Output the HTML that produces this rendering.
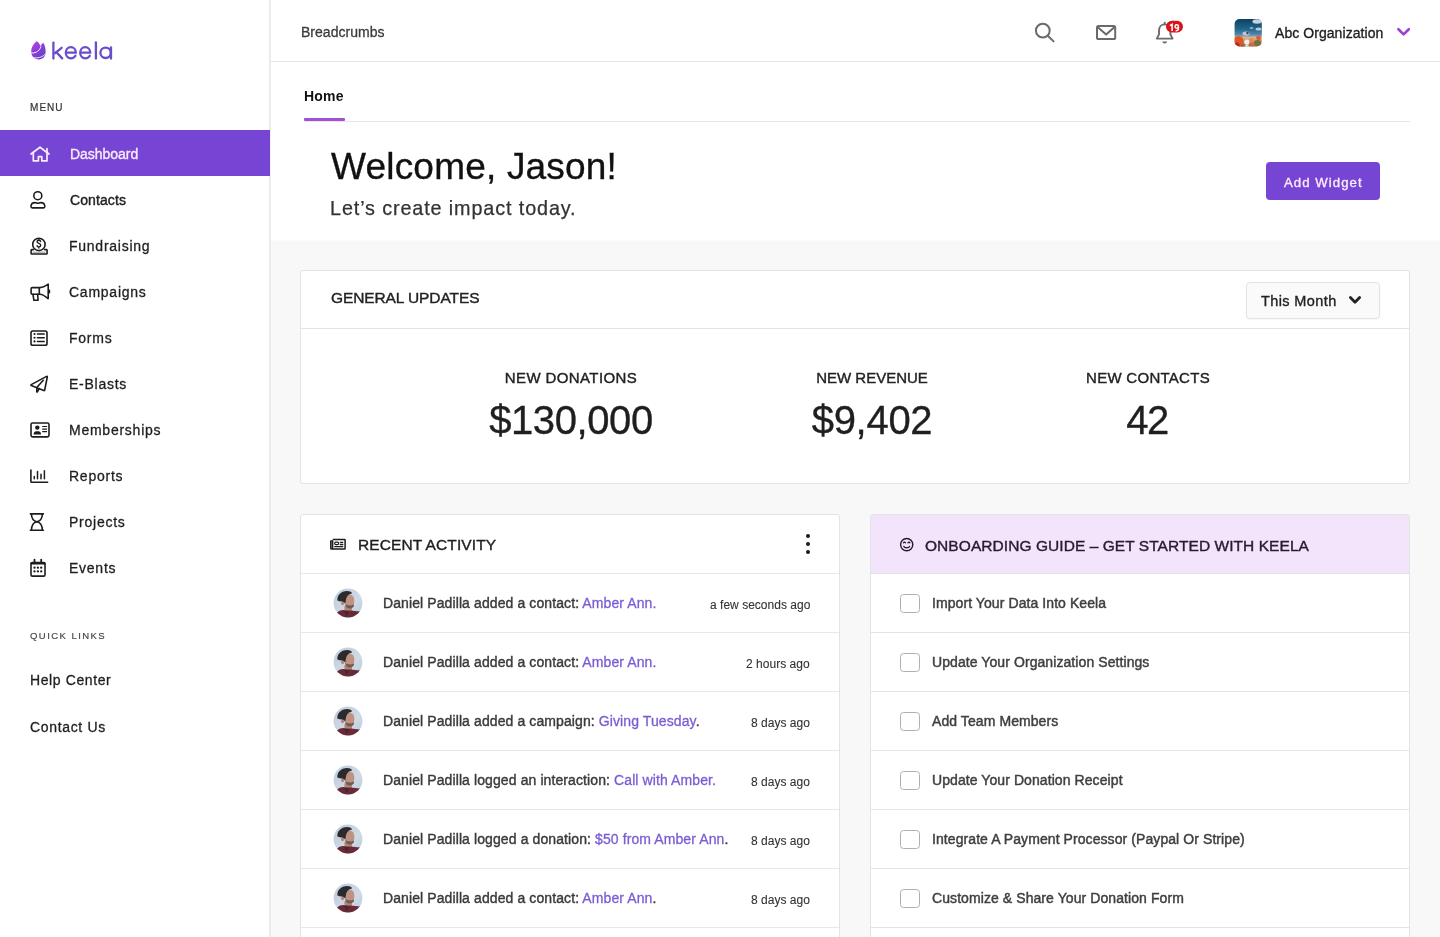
<!DOCTYPE html>
<html><head><meta charset="utf-8">
<style>
*{box-sizing:border-box;margin:0;padding:0}
html,body{width:1440px;height:937px;overflow:hidden}
body{background:#f8f8f8;font-family:"Liberation Sans",sans-serif;color:#222;position:relative}
.a{position:absolute;white-space:nowrap;line-height:1;will-change:transform}
.ico{position:absolute;overflow:visible}
</style></head>
<body>
<div style="position:absolute;left:0px;top:0px;width:270px;height:937px;background:#fff"></div>
<div style="position:absolute;left:270px;top:0px;width:1170px;height:62px;background:#fff;border-bottom:1px solid #e4e4e4"></div>
<div style="position:absolute;left:270px;top:62px;width:1170px;height:178px;background:#fff"></div>
<div style="position:absolute;left:271px;top:240px;width:1169px;height:1px;background:#fbfbfb"></div>
<div style="position:absolute;left:269px;top:0px;width:1px;height:130px;background:#e9e9e9"></div>
<div style="position:absolute;left:269px;top:176px;width:1px;height:761px;background:#e9e9e9"></div>
<div style="position:absolute;left:270px;top:0px;width:1px;height:937px;background:#efefef"></div>
<svg class="ico" style="left:28px;top:38px;" width="88" height="24" viewBox="28 38 88 24">
<defs><linearGradient id="lg" x1="0" y1="0" x2="0.6" y2="1"><stop offset="0" stop-color="#b83ee4"/><stop offset="0.55" stop-color="#8a42d8"/><stop offset="1" stop-color="#6140c6"/></linearGradient></defs>
<path fill="url(#lg)" d="M36.8 41.3 C34.2 43.2 31.4 46.8 31.2 51.2 C31.1 53.8 32 56 33.6 57.6 C35.8 59.6 39.2 60 41.8 58.8 C43.6 57.9 44.9 56.2 45.4 54.2 C45.8 52 45.6 48.6 44.9 46.2 C44.5 44.8 43.9 43.6 43.1 42.8 C41.9 43.8 41 45.2 40.6 46.8 C40.2 44.6 38.8 42.6 36.8 41.3 Z"/>
<path fill="none" stroke="#fbeaff" stroke-width="1.0" d="M30.4 52.6 C34.4 53.8 39 52 41 46.6"/>
<path fill="none" stroke="#fbeaff" stroke-width="1.0" d="M32.6 57.5 C37 58.6 42.6 57.6 46.2 53.2"/>
<g fill="none" stroke="#6a4ccc" stroke-width="2.3" stroke-linecap="round">
<path d="M53.4 42.6 V58.6"/>
<path d="M61.6 47.8 L55.2 53.2"/><path d="M56.2 52 L62.2 58.4"/>
<path d="M66.2 52.6 H75.8 C75.8 49.4 73.6 47.2 70.9 47.2 C68 47.2 65.8 49.6 65.8 52.8 C65.8 56 68 58.3 70.9 58.3 C73 58.3 74.6 57.3 75.4 55.8"/>
<path d="M80.6 52.6 H90.2 C90.2 49.4 88 47.2 85.3 47.2 C82.4 47.2 80.2 49.6 80.2 52.8 C80.2 56 82.4 58.3 85.3 58.3 C87.4 58.3 89 57.3 89.8 55.8"/>
<path d="M95.9 42.4 V58.6"/>
<circle cx="105.6" cy="52.8" r="5.2"/>
<path d="M111 47.4 V58.6"/>
</g></svg>
<div class="a" style="top:102.53px;font-size:10px;color:#333;letter-spacing:1.05px;-webkit-text-stroke:0.2px #333;left:30px;">MENU</div>
<div style="position:absolute;left:0px;top:130px;width:270px;height:46px;background:#7645d3"></div>
<div class="a" style="top:146.75px;font-size:14px;color:#fdeafd;letter-spacing:-0.04px;-webkit-text-stroke:0.35px #fdeafd;left:70px;">Dashboard</div>
<div class="a" style="top:193.15px;font-size:14px;color:#222;letter-spacing:0.1px;-webkit-text-stroke:0.4px #222;left:70px;">Contacts</div>
<div class="a" style="top:239.15px;font-size:14px;color:#1f1f1f;letter-spacing:0.75px;-webkit-text-stroke:0.3px #1f1f1f;left:69px;">Fundraising</div>
<div class="a" style="top:285.15px;font-size:14px;color:#1f1f1f;letter-spacing:0.75px;-webkit-text-stroke:0.3px #1f1f1f;left:69px;">Campaigns</div>
<div class="a" style="top:331.15px;font-size:14px;color:#1f1f1f;letter-spacing:0.75px;-webkit-text-stroke:0.3px #1f1f1f;left:69px;">Forms</div>
<div class="a" style="top:377.15px;font-size:14px;color:#1f1f1f;letter-spacing:0.75px;-webkit-text-stroke:0.3px #1f1f1f;left:69px;">E-Blasts</div>
<div class="a" style="top:423.15px;font-size:14px;color:#1f1f1f;letter-spacing:0.75px;-webkit-text-stroke:0.3px #1f1f1f;left:69px;">Memberships</div>
<div class="a" style="top:469.15px;font-size:14px;color:#1f1f1f;letter-spacing:0.75px;-webkit-text-stroke:0.3px #1f1f1f;left:69px;">Reports</div>
<div class="a" style="top:515.15px;font-size:14px;color:#1f1f1f;letter-spacing:0.75px;-webkit-text-stroke:0.3px #1f1f1f;left:69px;">Projects</div>
<div class="a" style="top:561.15px;font-size:14px;color:#1f1f1f;letter-spacing:0.75px;-webkit-text-stroke:0.3px #1f1f1f;left:69px;">Events</div>
<svg class="ico" style="left:25px;top:140px;" width="30" height="30" viewBox="25 140 30 30"><g fill="none" stroke="#fdeafd" stroke-width="1.7" stroke-linecap="round" stroke-linejoin="round"><path d="M31 154 L40 147.2 L49 154"/><path d="M33.3 152.4 V160.9 H38.4 V156.7 H41.8 V160.9 H47 V152.4"/><path d="M47 148.6 V151.2"/></g></svg>
<svg class="ico" style="left:25px;top:185px;" width="30" height="30" viewBox="25 185 30 30"><g fill="none" stroke="#1d1d1d" stroke-width="1.6" stroke-linecap="round" stroke-linejoin="round"><circle cx="37.8" cy="195.7" r="4"/><path d="M31 206.6 C31 204 32.8 202.6 35 202.6 C36.5 202.6 37 203.3 37.9 203.3 C38.8 203.3 39.3 202.6 40.8 202.6 C43 202.6 44.8 204 44.8 206.6 C44.8 207.4 44.3 207.9 43.6 207.9 H32.2 C31.4 207.9 31 207.4 31 206.6 Z"/></g></svg>
<svg class="ico" style="left:25px;top:231px;" width="30" height="30" viewBox="25 231 30 30"><g fill="none" stroke="#1d1d1d" stroke-width="1.6" stroke-linecap="round" stroke-linejoin="round"><path d="M33.4 249.6 H31.8 C31.3 249.6 31.1 249.9 31.1 250.3 V253.3 C31.1 253.8 31.4 254 31.8 254 H46.4 C46.8 254 47.1 253.8 47.1 253.3 V250.3 C47.1 249.9 46.8 249.6 46.4 249.6 H44.6"/><circle cx="38.9" cy="244.4" r="6.2"/><path d="M33 252.2 H45" stroke="#999" stroke-width="1"/><path d="M40.6 241.4 C40.2 240.6 39.6 240.3 38.8 240.3 C37.8 240.3 37.1 240.9 37.1 241.8 C37.1 243.8 40.7 243.1 40.7 245.3 C40.7 246.2 39.9 246.9 38.9 246.9 C38 246.9 37.3 246.5 37 245.8 M38.9 239.2 V240.3 M38.9 246.9 V248" stroke-width="1.4"/></g></svg>
<svg class="ico" style="left:25px;top:277px;" width="30" height="30" viewBox="25 277 30 30"><g fill="none" stroke="#1d1d1d" stroke-width="1.6" stroke-linecap="round" stroke-linejoin="round"><path d="M32.2 287.6 H40 C43 287.6 45.6 286 48.2 284.2 V298.6 C45.6 296.6 43 294.2 40 294.2 H32.2 C31.5 294.2 31.1 293.7 31.1 293 V288.8 C31.1 288.1 31.5 287.6 32.2 287.6 Z"/><path d="M39.3 287.8 V294"/><path d="M33 294.4 L33.9 300.3 H38.1 L37.6 294.4"/><path d="M49.3 290.4 V292.6" stroke-width="1.8"/></g></svg>
<svg class="ico" style="left:25px;top:323px;" width="30" height="30" viewBox="25 323 30 30"><g fill="none" stroke="#1d1d1d" stroke-width="1.6" stroke-linecap="round" stroke-linejoin="round"><rect x="31" y="331" width="16" height="14.2" rx="1.8"/><path d="M37.4 334 H44.2 M37.4 337.8 H44.2 M37.4 341.4 H44.2" stroke-width="1.5"/></g><g fill="#1d1d1d"><circle cx="34.5" cy="334" r="1.05"/><circle cx="34.5" cy="337.8" r="1.05"/><circle cx="34.5" cy="341.4" r="1.05"/></g></svg>
<svg class="ico" style="left:25px;top:369px;" width="30" height="30" viewBox="25 369 30 30"><g fill="none" stroke="#1d1d1d" stroke-width="1.6" stroke-linecap="round" stroke-linejoin="round"><path d="M31.2 384.6 L46.6 376.4 C47 376.2 47.4 376.5 47.3 377 L44.7 390 C44.6 390.5 44.2 390.7 43.7 390.5 L31.3 385.6 C30.9 385.4 30.9 384.8 31.2 384.6 Z"/><path d="M43.3 380.3 L37 387.2 L36.7 391.6 C36.7 392 37.1 392.2 37.4 391.9 L39.2 388.6"/></g></svg>
<svg class="ico" style="left:25px;top:415px;" width="30" height="30" viewBox="25 415 30 30"><g fill="none" stroke="#1d1d1d" stroke-width="1.6" stroke-linecap="round" stroke-linejoin="round"><rect x="31" y="423" width="18" height="13.9" rx="1.6"/><path d="M42.6 426.5 H46.6 M42.6 429.1 H46.6 M42.6 431.6 H46.6" stroke-width="1.1"/></g><g fill="#1d1d1d"><circle cx="37.3" cy="427.6" r="2.2"/><path d="M33.6 434.4 C33.6 432.4 35 431.2 36.2 431.2 H38.4 C39.8 431.2 41 432.4 41 434.4 Z"/></g></svg>
<svg class="ico" style="left:25px;top:461px;" width="30" height="30" viewBox="25 461 30 30"><g fill="none" stroke="#1d1d1d" stroke-width="1.6" stroke-linecap="round" stroke-linejoin="round"><path d="M30.9 470 V481.4 C30.9 481.9 31.2 482.2 31.7 482.2 H47.6"/><path d="M34.3 476.6 V478.8 M37.5 471.6 V478.8 M41 474.3 V478.8 M44.4 470.8 V478.8" stroke-width="1.5"/></g></svg>
<svg class="ico" style="left:25px;top:507px;" width="30" height="30" viewBox="25 507 30 30"><g fill="none" stroke="#1d1d1d" stroke-width="1.6" stroke-linecap="round" stroke-linejoin="round"><path d="M30.4 513.9 H43.4 M30.4 530.3 H43.4"/><path d="M31.4 514 C31.6 518.4 33.4 521.1 36.9 521.7 C40.4 521.1 42.2 518.4 42.4 514"/><path d="M31.4 530.2 C31.6 525.4 33.4 522.3 36.9 521.7 C40.4 522.3 42.2 525.4 42.4 530.2"/></g></svg>
<svg class="ico" style="left:25px;top:553px;" width="30" height="30" viewBox="25 553 30 30"><g fill="none" stroke="#1d1d1d" stroke-width="1.6" stroke-linecap="round" stroke-linejoin="round"><rect x="31" y="562.5" width="14" height="13.6" rx="1.4"/><path d="M31.2 563.4 H44.8" stroke-width="2"/><path d="M34.5 559.6 V562 M41.2 559.6 V562" stroke-width="1.8"/></g><g fill="#1d1d1d"><circle cx="34.5" cy="567.7" r="1.15"/><circle cx="37.9" cy="567.7" r="1.15"/><circle cx="41.2" cy="567.7" r="1.15"/><circle cx="34.5" cy="571.4" r="1.15"/><circle cx="37.9" cy="571.4" r="1.15"/><circle cx="41.2" cy="571.4" r="1.15"/></g></svg>
<div class="a" style="top:630.86px;font-size:9.5px;color:#444;letter-spacing:1.45px;-webkit-text-stroke:0.15px #444;left:30px;">QUICK LINKS</div>
<div class="a" style="top:673.45px;font-size:14px;color:#1f1f1f;letter-spacing:0.6px;-webkit-text-stroke:0.3px #1f1f1f;left:30px;">Help Center</div>
<div class="a" style="top:719.65px;font-size:14px;color:#1f1f1f;letter-spacing:0.66px;-webkit-text-stroke:0.3px #1f1f1f;left:30px;">Contact Us</div>
<div class="a" style="top:24.95px;font-size:14px;color:#3c3c3c;letter-spacing:0.02px;-webkit-text-stroke:0.3px #3c3c3c;left:300.5px;">Breadcrumbs</div>
<svg class="ico" style="left:1030px;top:15px;" width="30" height="32" viewBox="1030 15 30 32"><g fill="none" stroke="#6a6a6a" stroke-width="2" stroke-linecap="round" stroke-linejoin="round"><circle cx="1042.8" cy="30.6" r="6.9"/><path d="M1047.8 35.8 L1053.6 41.4"/></g></svg>
<svg class="ico" style="left:1090px;top:15px;" width="32" height="32" viewBox="1090 15 32 32"><g fill="none" stroke="#6a6a6a" stroke-width="2" stroke-linecap="round" stroke-linejoin="round"><rect x="1097" y="25.9" width="18.2" height="13.1" rx="1.6"/><path d="M1097.6 27 L1106.1 34.6 L1114.6 27"/></g></svg>
<svg class="ico" style="left:1150px;top:12px;" width="40" height="35" viewBox="1150 12 40 35"><g fill="none" stroke="#6a6a6a" stroke-width="2" stroke-linecap="round" stroke-linejoin="round"><path d="M1156.8 38.6 H1172.6 L1170.4 34.4 V30.8 C1170.4 27 1168 24.4 1164.7 24.4 C1161.4 24.4 1159 27 1159 30.8 V34.4 Z" stroke-width="1.9"/><path d="M1164.7 22.8 V24.2" stroke-width="1.9"/></g><path d="M1162.3 41.4 H1167.1 C1166.9 42.7 1166 43.4 1164.7 43.4 C1163.4 43.4 1162.5 42.7 1162.3 41.4 Z" fill="#6a6a6a"/><rect x="1166" y="20.8" width="17" height="11.8" rx="5.9" fill="#d7141a"/></svg>
<svg class="ico" style="left:1166px;top:20px;" width="18" height="13" viewBox="1166 20 18 13"><g fill="none" stroke="#fff" stroke-width="1.55" stroke-linecap="butt"><path d="M1169.9 25.6 L1172.1 24.3 V31.1"/><circle cx="1176.7" cy="26.5" r="1.75" stroke-width="1.45"/><path d="M1178.45 26.6 V28.6 C1178.45 30.2 1177.5 30.9 1175.6 30.9" stroke-width="1.45"/></g></svg>
<svg class="ico" style="left:1234px;top:19px;" width="28" height="28" viewBox="1234 19 28 28"><defs><linearGradient id="sky" x1="0" y1="0" x2="0" y2="1"><stop offset="0" stop-color="#0e3f63"/><stop offset="0.35" stop-color="#1f6688"/><stop offset="0.55" stop-color="#4f86ad"/><stop offset="0.66" stop-color="#c9b8a0"/><stop offset="0.75" stop-color="#e39a5c"/><stop offset="1" stop-color="#9a5a38"/></linearGradient><clipPath id="oc"><rect x="1234.6" y="19" width="27.2" height="27.4" rx="5"/></clipPath><filter id="bl" x="-20%" y="-20%" width="140%" height="140%"><feGaussianBlur stdDeviation="0.7"/></filter></defs>
<g clip-path="url(#oc)"><rect x="1234" y="19" width="28" height="28" fill="url(#sky)"/>
<g filter="url(#bl)"><ellipse cx="1257" cy="21.5" rx="4.5" ry="2.2" fill="#c9d3dc"/><ellipse cx="1258.5" cy="29" rx="3" ry="1.6" fill="#b7cad8"/><ellipse cx="1251.5" cy="28" rx="1.8" ry="0.9" fill="#8fb2c8"/>
<ellipse cx="1246" cy="33.5" rx="3.5" ry="2" fill="#c4c6cc"/><circle cx="1247.5" cy="33" r="1.2" fill="#3a3470"/>
<ellipse cx="1238.5" cy="41.5" rx="5" ry="5.5" fill="#e0542c"/><circle cx="1237" cy="45" r="2.5" fill="#b42a1e"/>
<circle cx="1246.8" cy="42" r="2.6" fill="#eef0ee"/><circle cx="1247" cy="46" r="1.8" fill="#dfe5df"/>
<circle cx="1251.5" cy="39.5" r="1.6" fill="#e2856a"/><circle cx="1258.5" cy="37.8" r="2.4" fill="#de5a34"/>
<ellipse cx="1257.5" cy="43" rx="3.5" ry="3" fill="#6b7440"/><circle cx="1253" cy="45" r="1.8" fill="#d9683a"/><circle cx="1242.5" cy="46" r="1.6" fill="#7a6a3a"/></g></g></svg>
<div class="a" style="top:25.95px;font-size:14px;color:#1f1f1f;letter-spacing:0.06px;-webkit-text-stroke:0.35px #1f1f1f;left:1275px;">Abc Organization</div>
<svg class="ico" style="left:1394px;top:24px;" width="20" height="16" viewBox="1394 24 20 16"><path d="M1398.4 29.2 L1403.6 34.4 L1408.8 29.2" fill="none" stroke="#9b44d2" stroke-width="2.7" stroke-linecap="round" stroke-linejoin="round"/></svg>
<div class="a" style="top:89.15px;font-size:14px;color:#111;letter-spacing:0.23px;font-weight:bold;left:304.4px;">Home</div>
<div style="position:absolute;left:304px;top:120.6px;width:1106px;height:1px;background:#e6e6e6"></div>
<div style="position:absolute;left:304px;top:118px;width:41px;height:3px;background:#a24fd3;border-radius:1px"></div>
<div class="a" style="top:148.27px;font-size:37px;color:#111;letter-spacing:0.2px;-webkit-text-stroke:0.35px #111;left:330.5px;">Welcome, Jason!</div>
<div class="a" style="top:199.04px;font-size:19.8px;color:#333;letter-spacing:0.88px;-webkit-text-stroke:0.25px #333;left:330.2px;">Let’s create impact today.</div>
<div style="position:absolute;left:1266px;top:162px;width:114px;height:38px;background:#7645d3;border-radius:4px"></div>
<div class="a" style="top:175.82px;font-size:13.2px;color:#fdeafd;letter-spacing:1.05px;-webkit-text-stroke:0.35px #fdeafd;left:1284.2px;">Add Widget</div>
<div style="position:absolute;left:300px;top:270px;width:1110px;height:214px;background:#fff;border:1px solid #e3e3e3;border-radius:3px"></div>
<div style="position:absolute;left:301px;top:327.6px;width:1108px;height:1px;background:#e4e4e4"></div>
<div class="a" style="top:290.48px;font-size:15.5px;color:#222;letter-spacing:-0.1px;-webkit-text-stroke:0.4px #222;left:330.8px;">GENERAL UPDATES</div>
<div style="position:absolute;left:1245.6px;top:281.6px;width:134.4px;height:37px;background:#fafafb;border:1px solid #e3e3e6;border-radius:4px;box-shadow:0 1px 2px rgba(0,0,0,0.04)"></div>
<div class="a" style="top:293.82px;font-size:14.5px;color:#222;letter-spacing:0.39px;-webkit-text-stroke:0.35px #222;left:1261.3px;">This Month</div>
<svg class="ico" style="left:1344px;top:290px;" width="22" height="18" viewBox="1344 290 22 18"><path d="M1350.4 297.6 L1355 302.2 L1359.6 297.6" fill="none" stroke="#222" stroke-width="2.8" stroke-linecap="round" stroke-linejoin="round"/></svg>
<div class="a" style="top:370.20px;font-size:15px;color:#222;letter-spacing:0.38999999999999996px;-webkit-text-stroke:0.4px #222;left:571.40px;transform:translateX(-50%);">NEW DONATIONS</div>
<div class="a" style="top:400.43px;font-size:40px;color:#1f1f1f;letter-spacing:-0.4px;-webkit-text-stroke:0.35px #1f1f1f;left:571.00px;transform:translateX(-50%);">$130,000</div>
<div class="a" style="top:370.20px;font-size:15px;color:#222;-webkit-text-stroke:0.4px #222;left:872.30px;transform:translateX(-50%);">NEW REVENUE</div>
<div class="a" style="top:400.43px;font-size:40px;color:#1f1f1f;letter-spacing:-0.3px;-webkit-text-stroke:0.35px #1f1f1f;left:872.15px;transform:translateX(-50%);">$9,402</div>
<div class="a" style="top:370.20px;font-size:15px;color:#222;letter-spacing:0.27999999999999997px;-webkit-text-stroke:0.4px #222;left:1148.34px;transform:translateX(-50%);">NEW CONTACTS</div>
<div class="a" style="top:400.43px;font-size:40px;color:#1f1f1f;letter-spacing:-1.5px;-webkit-text-stroke:0.35px #1f1f1f;left:1147.45px;transform:translateX(-50%);">42</div>
<div style="position:absolute;left:300px;top:514px;width:540px;height:430px;background:#fff;border:1px solid #e3e3e3;border-radius:3px"></div>
<svg class="ico" style="left:326px;top:534px;" width="24" height="20" viewBox="326 534 24 20"><g fill="none" stroke="#1d1d1d" stroke-width="1.5" stroke-linejoin="round"><path d="M332.7 539.6 H344.6 C344.9 539.6 345.1 539.8 345.1 540.1 V548.6 C345.1 548.9 344.9 549.1 344.6 549.1 H331.6 C331.1 549.1 330.8 548.8 330.8 548.3 V540.9 H332.6 V548.9"/></g><g fill="none" stroke="#1d1d1d" stroke-width="1.2" stroke-linecap="round"><rect x="334.7" y="542.1" width="3.9" height="2.5" rx="1.2"/><path d="M340.3 542.3 H342.8 M340.3 544.5 H342.8 M334.7 546.6 H342.8" stroke-width="1.3"/></g></svg>
<div class="a" style="top:537.38px;font-size:15.5px;color:#1f1f1f;letter-spacing:0.1px;-webkit-text-stroke:0.4px #1f1f1f;left:357.6px;">RECENT ACTIVITY</div>
<div style="position:absolute;left:806px;top:534px;width:4.2px;height:4.2px;border-radius:50%;background:#1a1a1a"></div>
<div style="position:absolute;left:806px;top:542px;width:4.2px;height:4.2px;border-radius:50%;background:#1a1a1a"></div>
<div style="position:absolute;left:806px;top:550px;width:4.2px;height:4.2px;border-radius:50%;background:#1a1a1a"></div>
<div style="position:absolute;left:301px;top:573px;width:538px;height:1px;background:#e8e8e8"></div>
<svg class="ico" style="left:332.5px;top:588px;" width="30" height="30" viewBox="332.5 588 30 30"><defs><clipPath id="pc0"><circle cx="347.5" cy="603" r="14.4"/></clipPath><linearGradient id="bg0" x1="0" y1="0" x2="1" y2="1"><stop offset="0" stop-color="#bccadb"/><stop offset="0.6" stop-color="#cfdae6"/><stop offset="1" stop-color="#b9c8d8"/></linearGradient></defs>
<g clip-path="url(#pc0)"><rect x="332.5" y="588" width="30" height="30" fill="url(#bg0)"/>
<path d="M344.00 606.00 C343.50 609.00 344.50 612.00 345.50 613.00 L351.50 613.00 351.50 607.00 Z" fill="#b08676"/>
<ellipse cx="349.1" cy="601" rx="4.8" ry="6.6" fill="#bf9282"/>
<path d="M344.50 604.00 C345.50 609.00 350.00 610.00 353.30 606.50 L353.50 604.50 350.50 605.50 346.50 605.00 Z" fill="#6f5c52"/>
<ellipse cx="342.1" cy="603.2" rx="1.5" ry="2.1" fill="#b48474"/>
<path d="M336.90 600.50 C336.30 595.50 340.50 591.00 346.50 591.00 C349.50 591.00 351.50 592.00 351.50 593.50 C349.00 594.00 346.50 595.50 345.70 598.50 L344.70 603.50 C343.00 601.50 341.00 601.00 340.00 601.50 Z" fill="#2b2a2e"/>
<path d="M335.50 619.00 L336.50 612.50 C339.50 609.50 343.50 609.50 346.50 610.50 C349.50 610.50 354.50 611.00 361.50 611.50 L362.50 619.00 Z" fill="#6b2836"/>
<path d="M343.50 611.00 L346.50 616.00 348.50 611.40 Z" fill="#3c2a2e"/></g></svg>
<div class="a" style="top:595.95px;font-size:14px;color:#3a3a3a;letter-spacing:0.1px;-webkit-text-stroke:0.4px #3a3a3a;left:383.4px;">Daniel Padilla added a contact: <span style="color:#7b5cd3;-webkit-text-stroke:0.3px #7b5cd3">Amber Ann.</span></div>
<div class="a" style="top:598.84px;font-size:12px;color:#333;letter-spacing:0.02px;-webkit-text-stroke:0.1px #333;right:629.98px;">a few seconds ago</div>
<div style="position:absolute;left:301px;top:632px;width:538px;height:1px;background:#e8e8e8"></div>
<svg class="ico" style="left:332.5px;top:647px;" width="30" height="30" viewBox="332.5 647 30 30"><defs><clipPath id="pc1"><circle cx="347.5" cy="662" r="14.4"/></clipPath><linearGradient id="bg1" x1="0" y1="0" x2="1" y2="1"><stop offset="0" stop-color="#bccadb"/><stop offset="0.6" stop-color="#cfdae6"/><stop offset="1" stop-color="#b9c8d8"/></linearGradient></defs>
<g clip-path="url(#pc1)"><rect x="332.5" y="647" width="30" height="30" fill="url(#bg1)"/>
<path d="M344.00 665.00 C343.50 668.00 344.50 671.00 345.50 672.00 L351.50 672.00 351.50 666.00 Z" fill="#b08676"/>
<ellipse cx="349.1" cy="660" rx="4.8" ry="6.6" fill="#bf9282"/>
<path d="M344.50 663.00 C345.50 668.00 350.00 669.00 353.30 665.50 L353.50 663.50 350.50 664.50 346.50 664.00 Z" fill="#6f5c52"/>
<ellipse cx="342.1" cy="662.2" rx="1.5" ry="2.1" fill="#b48474"/>
<path d="M336.90 659.50 C336.30 654.50 340.50 650.00 346.50 650.00 C349.50 650.00 351.50 651.00 351.50 652.50 C349.00 653.00 346.50 654.50 345.70 657.50 L344.70 662.50 C343.00 660.50 341.00 660.00 340.00 660.50 Z" fill="#2b2a2e"/>
<path d="M335.50 678.00 L336.50 671.50 C339.50 668.50 343.50 668.50 346.50 669.50 C349.50 669.50 354.50 670.00 361.50 670.50 L362.50 678.00 Z" fill="#6b2836"/>
<path d="M343.50 670.00 L346.50 675.00 348.50 670.40 Z" fill="#3c2a2e"/></g></svg>
<div class="a" style="top:654.95px;font-size:14px;color:#3a3a3a;letter-spacing:0.1px;-webkit-text-stroke:0.4px #3a3a3a;left:383.4px;">Daniel Padilla added a contact: <span style="color:#7b5cd3;-webkit-text-stroke:0.3px #7b5cd3">Amber Ann.</span></div>
<div class="a" style="top:657.84px;font-size:12px;color:#333;letter-spacing:0.02px;-webkit-text-stroke:0.1px #333;right:629.98px;">2 hours ago</div>
<div style="position:absolute;left:301px;top:691px;width:538px;height:1px;background:#e8e8e8"></div>
<svg class="ico" style="left:332.5px;top:706px;" width="30" height="30" viewBox="332.5 706 30 30"><defs><clipPath id="pc2"><circle cx="347.5" cy="721" r="14.4"/></clipPath><linearGradient id="bg2" x1="0" y1="0" x2="1" y2="1"><stop offset="0" stop-color="#bccadb"/><stop offset="0.6" stop-color="#cfdae6"/><stop offset="1" stop-color="#b9c8d8"/></linearGradient></defs>
<g clip-path="url(#pc2)"><rect x="332.5" y="706" width="30" height="30" fill="url(#bg2)"/>
<path d="M344.00 724.00 C343.50 727.00 344.50 730.00 345.50 731.00 L351.50 731.00 351.50 725.00 Z" fill="#b08676"/>
<ellipse cx="349.1" cy="719" rx="4.8" ry="6.6" fill="#bf9282"/>
<path d="M344.50 722.00 C345.50 727.00 350.00 728.00 353.30 724.50 L353.50 722.50 350.50 723.50 346.50 723.00 Z" fill="#6f5c52"/>
<ellipse cx="342.1" cy="721.2" rx="1.5" ry="2.1" fill="#b48474"/>
<path d="M336.90 718.50 C336.30 713.50 340.50 709.00 346.50 709.00 C349.50 709.00 351.50 710.00 351.50 711.50 C349.00 712.00 346.50 713.50 345.70 716.50 L344.70 721.50 C343.00 719.50 341.00 719.00 340.00 719.50 Z" fill="#2b2a2e"/>
<path d="M335.50 737.00 L336.50 730.50 C339.50 727.50 343.50 727.50 346.50 728.50 C349.50 728.50 354.50 729.00 361.50 729.50 L362.50 737.00 Z" fill="#6b2836"/>
<path d="M343.50 729.00 L346.50 734.00 348.50 729.40 Z" fill="#3c2a2e"/></g></svg>
<div class="a" style="top:713.95px;font-size:14px;color:#3a3a3a;letter-spacing:0.1px;-webkit-text-stroke:0.4px #3a3a3a;left:383.4px;">Daniel Padilla added a campaign: <span style="color:#7b5cd3;-webkit-text-stroke:0.3px #7b5cd3">Giving Tuesday</span>.</div>
<div class="a" style="top:716.84px;font-size:12px;color:#333;letter-spacing:0.02px;-webkit-text-stroke:0.1px #333;right:629.98px;">8 days ago</div>
<div style="position:absolute;left:301px;top:750px;width:538px;height:1px;background:#e8e8e8"></div>
<svg class="ico" style="left:332.5px;top:765px;" width="30" height="30" viewBox="332.5 765 30 30"><defs><clipPath id="pc3"><circle cx="347.5" cy="780" r="14.4"/></clipPath><linearGradient id="bg3" x1="0" y1="0" x2="1" y2="1"><stop offset="0" stop-color="#bccadb"/><stop offset="0.6" stop-color="#cfdae6"/><stop offset="1" stop-color="#b9c8d8"/></linearGradient></defs>
<g clip-path="url(#pc3)"><rect x="332.5" y="765" width="30" height="30" fill="url(#bg3)"/>
<path d="M344.00 783.00 C343.50 786.00 344.50 789.00 345.50 790.00 L351.50 790.00 351.50 784.00 Z" fill="#b08676"/>
<ellipse cx="349.1" cy="778" rx="4.8" ry="6.6" fill="#bf9282"/>
<path d="M344.50 781.00 C345.50 786.00 350.00 787.00 353.30 783.50 L353.50 781.50 350.50 782.50 346.50 782.00 Z" fill="#6f5c52"/>
<ellipse cx="342.1" cy="780.2" rx="1.5" ry="2.1" fill="#b48474"/>
<path d="M336.90 777.50 C336.30 772.50 340.50 768.00 346.50 768.00 C349.50 768.00 351.50 769.00 351.50 770.50 C349.00 771.00 346.50 772.50 345.70 775.50 L344.70 780.50 C343.00 778.50 341.00 778.00 340.00 778.50 Z" fill="#2b2a2e"/>
<path d="M335.50 796.00 L336.50 789.50 C339.50 786.50 343.50 786.50 346.50 787.50 C349.50 787.50 354.50 788.00 361.50 788.50 L362.50 796.00 Z" fill="#6b2836"/>
<path d="M343.50 788.00 L346.50 793.00 348.50 788.40 Z" fill="#3c2a2e"/></g></svg>
<div class="a" style="top:772.95px;font-size:14px;color:#3a3a3a;letter-spacing:0.1px;-webkit-text-stroke:0.4px #3a3a3a;left:383.4px;">Daniel Padilla logged an interaction: <span style="color:#7b5cd3;-webkit-text-stroke:0.3px #7b5cd3">Call with Amber.</span></div>
<div class="a" style="top:775.84px;font-size:12px;color:#333;letter-spacing:0.02px;-webkit-text-stroke:0.1px #333;right:629.98px;">8 days ago</div>
<div style="position:absolute;left:301px;top:809px;width:538px;height:1px;background:#e8e8e8"></div>
<svg class="ico" style="left:332.5px;top:824px;" width="30" height="30" viewBox="332.5 824 30 30"><defs><clipPath id="pc4"><circle cx="347.5" cy="839" r="14.4"/></clipPath><linearGradient id="bg4" x1="0" y1="0" x2="1" y2="1"><stop offset="0" stop-color="#bccadb"/><stop offset="0.6" stop-color="#cfdae6"/><stop offset="1" stop-color="#b9c8d8"/></linearGradient></defs>
<g clip-path="url(#pc4)"><rect x="332.5" y="824" width="30" height="30" fill="url(#bg4)"/>
<path d="M344.00 842.00 C343.50 845.00 344.50 848.00 345.50 849.00 L351.50 849.00 351.50 843.00 Z" fill="#b08676"/>
<ellipse cx="349.1" cy="837" rx="4.8" ry="6.6" fill="#bf9282"/>
<path d="M344.50 840.00 C345.50 845.00 350.00 846.00 353.30 842.50 L353.50 840.50 350.50 841.50 346.50 841.00 Z" fill="#6f5c52"/>
<ellipse cx="342.1" cy="839.2" rx="1.5" ry="2.1" fill="#b48474"/>
<path d="M336.90 836.50 C336.30 831.50 340.50 827.00 346.50 827.00 C349.50 827.00 351.50 828.00 351.50 829.50 C349.00 830.00 346.50 831.50 345.70 834.50 L344.70 839.50 C343.00 837.50 341.00 837.00 340.00 837.50 Z" fill="#2b2a2e"/>
<path d="M335.50 855.00 L336.50 848.50 C339.50 845.50 343.50 845.50 346.50 846.50 C349.50 846.50 354.50 847.00 361.50 847.50 L362.50 855.00 Z" fill="#6b2836"/>
<path d="M343.50 847.00 L346.50 852.00 348.50 847.40 Z" fill="#3c2a2e"/></g></svg>
<div class="a" style="top:831.95px;font-size:14px;color:#3a3a3a;letter-spacing:0.1px;-webkit-text-stroke:0.4px #3a3a3a;left:383.4px;">Daniel Padilla logged a donation: <span style="color:#7b5cd3;-webkit-text-stroke:0.3px #7b5cd3">$50 from Amber Ann</span>.</div>
<div class="a" style="top:834.84px;font-size:12px;color:#333;letter-spacing:0.02px;-webkit-text-stroke:0.1px #333;right:629.98px;">8 days ago</div>
<div style="position:absolute;left:301px;top:868px;width:538px;height:1px;background:#e8e8e8"></div>
<svg class="ico" style="left:332.5px;top:883px;" width="30" height="30" viewBox="332.5 883 30 30"><defs><clipPath id="pc5"><circle cx="347.5" cy="898" r="14.4"/></clipPath><linearGradient id="bg5" x1="0" y1="0" x2="1" y2="1"><stop offset="0" stop-color="#bccadb"/><stop offset="0.6" stop-color="#cfdae6"/><stop offset="1" stop-color="#b9c8d8"/></linearGradient></defs>
<g clip-path="url(#pc5)"><rect x="332.5" y="883" width="30" height="30" fill="url(#bg5)"/>
<path d="M344.00 901.00 C343.50 904.00 344.50 907.00 345.50 908.00 L351.50 908.00 351.50 902.00 Z" fill="#b08676"/>
<ellipse cx="349.1" cy="896" rx="4.8" ry="6.6" fill="#bf9282"/>
<path d="M344.50 899.00 C345.50 904.00 350.00 905.00 353.30 901.50 L353.50 899.50 350.50 900.50 346.50 900.00 Z" fill="#6f5c52"/>
<ellipse cx="342.1" cy="898.2" rx="1.5" ry="2.1" fill="#b48474"/>
<path d="M336.90 895.50 C336.30 890.50 340.50 886.00 346.50 886.00 C349.50 886.00 351.50 887.00 351.50 888.50 C349.00 889.00 346.50 890.50 345.70 893.50 L344.70 898.50 C343.00 896.50 341.00 896.00 340.00 896.50 Z" fill="#2b2a2e"/>
<path d="M335.50 914.00 L336.50 907.50 C339.50 904.50 343.50 904.50 346.50 905.50 C349.50 905.50 354.50 906.00 361.50 906.50 L362.50 914.00 Z" fill="#6b2836"/>
<path d="M343.50 906.00 L346.50 911.00 348.50 906.40 Z" fill="#3c2a2e"/></g></svg>
<div class="a" style="top:890.95px;font-size:14px;color:#3a3a3a;letter-spacing:0.1px;-webkit-text-stroke:0.4px #3a3a3a;left:383.4px;">Daniel Padilla added a contact: <span style="color:#7b5cd3;-webkit-text-stroke:0.3px #7b5cd3">Amber Ann</span>.</div>
<div class="a" style="top:893.84px;font-size:12px;color:#333;letter-spacing:0.02px;-webkit-text-stroke:0.1px #333;right:629.98px;">8 days ago</div>
<div style="position:absolute;left:301px;top:927px;width:538px;height:1px;background:#e8e8e8"></div>
<div style="position:absolute;left:870px;top:514px;width:540px;height:430px;background:#fff;border:1px solid #e3e3e3;border-radius:3px"></div>
<div style="position:absolute;left:871px;top:515px;width:538px;height:58px;background:#f3e4fc;border-radius:2px 2px 0 0"></div>
<svg class="ico" style="left:896px;top:535px;" width="22" height="20" viewBox="896 535 22 20"><g fill="none" stroke="#2a1a30" stroke-width="1.4" stroke-linecap="round"><circle cx="906.7" cy="544.6" r="6.1"/><path d="M903.9 546.4 C904.6 548.2 908.8 548.2 909.5 546.4"/><path d="M903.6 542.8 C904 542 905 542 905.4 542.8 M908 542.8 C908.4 542 909.4 542 909.8 542.8"/></g></svg>
<div class="a" style="top:537.98px;font-size:15.5px;color:#2a1a30;letter-spacing:0.06px;-webkit-text-stroke:0.4px #2a1a30;left:924.5px;">ONBOARDING GUIDE – GET STARTED WITH KEELA</div>
<div style="position:absolute;left:871px;top:573px;width:538px;height:1px;background:#e4e4e4"></div>
<div style="position:absolute;left:900.2px;top:593.6px;width:19.8px;height:19.6px;border:1.3px solid #b0b0b0;border-radius:3.5px;background:#fff"></div>
<div class="a" style="top:596.15px;font-size:14px;color:#3f3f3f;letter-spacing:0.08px;-webkit-text-stroke:0.45px #3f3f3f;left:931.8px;">Import Your Data Into Keela</div>
<div style="position:absolute;left:871px;top:632px;width:538px;height:1px;background:#e4e4e4"></div>
<div style="position:absolute;left:900.2px;top:652.6px;width:19.8px;height:19.6px;border:1.3px solid #b0b0b0;border-radius:3.5px;background:#fff"></div>
<div class="a" style="top:655.15px;font-size:14px;color:#3f3f3f;letter-spacing:0.08px;-webkit-text-stroke:0.45px #3f3f3f;left:931.8px;">Update Your Organization Settings</div>
<div style="position:absolute;left:871px;top:691px;width:538px;height:1px;background:#e4e4e4"></div>
<div style="position:absolute;left:900.2px;top:711.6px;width:19.8px;height:19.6px;border:1.3px solid #b0b0b0;border-radius:3.5px;background:#fff"></div>
<div class="a" style="top:714.15px;font-size:14px;color:#3f3f3f;letter-spacing:0.08px;-webkit-text-stroke:0.45px #3f3f3f;left:931.8px;">Add Team Members</div>
<div style="position:absolute;left:871px;top:750px;width:538px;height:1px;background:#e4e4e4"></div>
<div style="position:absolute;left:900.2px;top:770.6px;width:19.8px;height:19.6px;border:1.3px solid #b0b0b0;border-radius:3.5px;background:#fff"></div>
<div class="a" style="top:773.15px;font-size:14px;color:#3f3f3f;letter-spacing:0.08px;-webkit-text-stroke:0.45px #3f3f3f;left:931.8px;">Update Your Donation Receipt</div>
<div style="position:absolute;left:871px;top:809px;width:538px;height:1px;background:#e4e4e4"></div>
<div style="position:absolute;left:900.2px;top:829.6px;width:19.8px;height:19.6px;border:1.3px solid #b0b0b0;border-radius:3.5px;background:#fff"></div>
<div class="a" style="top:832.15px;font-size:14px;color:#3f3f3f;letter-spacing:0.08px;-webkit-text-stroke:0.45px #3f3f3f;left:931.8px;">Integrate A Payment Processor (Paypal Or Stripe)</div>
<div style="position:absolute;left:871px;top:868px;width:538px;height:1px;background:#e4e4e4"></div>
<div style="position:absolute;left:900.2px;top:888.6px;width:19.8px;height:19.6px;border:1.3px solid #b0b0b0;border-radius:3.5px;background:#fff"></div>
<div class="a" style="top:891.15px;font-size:14px;color:#3f3f3f;letter-spacing:0.08px;-webkit-text-stroke:0.45px #3f3f3f;left:931.8px;">Customize &amp; Share Your Donation Form</div>
<div style="position:absolute;left:871px;top:927px;width:538px;height:1px;background:#e4e4e4"></div>
</body></html>
